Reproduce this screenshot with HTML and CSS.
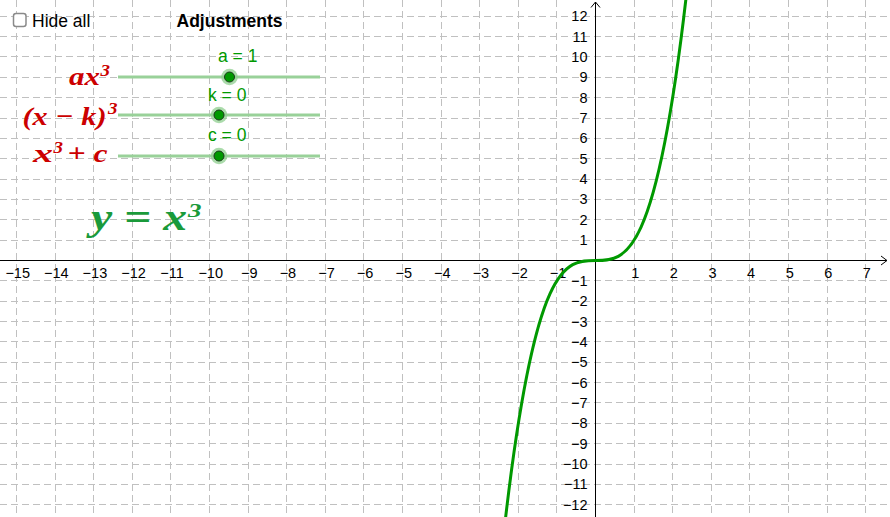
FILE: index.html
```html
<!DOCTYPE html>
<html lang="en">
<head>
<meta charset="utf-8">
<title>Adjustments y = x^3</title>
<link rel="stylesheet" href="styles.css">
</head>
<body>
<div class="stage">
<svg class="plot" width="890" height="517" viewBox="0 0 890 517" xmlns="http://www.w3.org/2000/svg">
  <g class="grid">
    <line x1="16.5" y1="0" x2="16.5" y2="517"/>
    <line x1="55.5" y1="0" x2="55.5" y2="517"/>
    <line x1="93.5" y1="0" x2="93.5" y2="517"/>
    <line x1="132.5" y1="0" x2="132.5" y2="517"/>
    <line x1="170.5" y1="0" x2="170.5" y2="517"/>
    <line x1="209.5" y1="0" x2="209.5" y2="517"/>
    <line x1="248.5" y1="0" x2="248.5" y2="517"/>
    <line x1="286.5" y1="0" x2="286.5" y2="517"/>
    <line x1="325.5" y1="0" x2="325.5" y2="517"/>
    <line x1="363.5" y1="0" x2="363.5" y2="517"/>
    <line x1="402.5" y1="0" x2="402.5" y2="517"/>
    <line x1="441.5" y1="0" x2="441.5" y2="517"/>
    <line x1="479.5" y1="0" x2="479.5" y2="517"/>
    <line x1="518.5" y1="0" x2="518.5" y2="517"/>
    <line x1="556.5" y1="0" x2="556.5" y2="517"/>
    <line x1="634.5" y1="0" x2="634.5" y2="517"/>
    <line x1="672.5" y1="0" x2="672.5" y2="517"/>
    <line x1="711.5" y1="0" x2="711.5" y2="517"/>
    <line x1="749.5" y1="0" x2="749.5" y2="517"/>
    <line x1="788.5" y1="0" x2="788.5" y2="517"/>
    <line x1="827.5" y1="0" x2="827.5" y2="517"/>
    <line x1="865.5" y1="0" x2="865.5" y2="517"/>

    <line x1="0" y1="16.5" x2="890" y2="16.5"/>
    <line x1="0" y1="36.5" x2="890" y2="36.5"/>
    <line x1="0" y1="56.5" x2="890" y2="56.5"/>
    <line x1="0" y1="77.5" x2="890" y2="77.5"/>
    <line x1="0" y1="97.5" x2="890" y2="97.5"/>
    <line x1="0" y1="118.5" x2="890" y2="118.5"/>
    <line x1="0" y1="138.5" x2="890" y2="138.5"/>
    <line x1="0" y1="158.5" x2="890" y2="158.5"/>
    <line x1="0" y1="179.5" x2="890" y2="179.5"/>
    <line x1="0" y1="199.5" x2="890" y2="199.5"/>
    <line x1="0" y1="219.5" x2="890" y2="219.5"/>
    <line x1="0" y1="240.5" x2="890" y2="240.5"/>
    <line x1="0" y1="280.5" x2="890" y2="280.5"/>
    <line x1="0" y1="301.5" x2="890" y2="301.5"/>
    <line x1="0" y1="321.5" x2="890" y2="321.5"/>
    <line x1="0" y1="341.5" x2="890" y2="341.5"/>
    <line x1="0" y1="362.5" x2="890" y2="362.5"/>
    <line x1="0" y1="382.5" x2="890" y2="382.5"/>
    <line x1="0" y1="402.5" x2="890" y2="402.5"/>
    <line x1="0" y1="423.5" x2="890" y2="423.5"/>
    <line x1="0" y1="443.5" x2="890" y2="443.5"/>
    <line x1="0" y1="464.5" x2="890" y2="464.5"/>
    <line x1="0" y1="484.5" x2="890" y2="484.5"/>
    <line x1="0" y1="504.5" x2="890" y2="504.5"/>
  </g>

  <g class="axis">
    <line x1="0" y1="260.5" x2="887" y2="260.5"/>
    <polyline class="arrow" points="881,256 887,260.5 881,265"/>
    <line x1="595.5" y1="517" x2="595.5" y2="2"/>
    <polyline class="arrow" points="591,7.5 595.5,2 600,7.5"/>
  </g>

  <g class="xlabels">
    <text x="17.7" y="278">−15</text>
    <text x="56.3" y="278">−14</text>
    <text x="94.9" y="278">−13</text>
    <text x="133.5" y="278">−12</text>
    <text x="172.1" y="278">−11</text>
    <text x="210.7" y="278">−10</text>
    <text x="249.3" y="278">−9</text>
    <text x="287.9" y="278">−8</text>
    <text x="326.5" y="278">−7</text>
    <text x="365.1" y="278">−6</text>
    <text x="403.7" y="278">−5</text>
    <text x="442.3" y="278">−4</text>
    <text x="480.9" y="278">−3</text>
    <text x="519.5" y="278">−2</text>
    <text x="558.1" y="278">−1</text>
    <text x="635.3" y="278">1</text>
    <text x="673.9" y="278">2</text>
    <text x="712.5" y="278">3</text>
    <text x="751.1" y="278">4</text>
    <text x="789.7" y="278">5</text>
    <text x="828.3" y="278">6</text>
    <text x="866.9" y="278">7</text>
  </g>

  <g class="ylabels">
    <text x="587.5" y="21.3">12</text>
    <text x="587.5" y="41.65">11</text>
    <text x="587.5" y="62">10</text>
    <text x="587.5" y="82.35">9</text>
    <text x="587.5" y="102.7">8</text>
    <text x="587.5" y="123.05">7</text>
    <text x="587.5" y="143.4">6</text>
    <text x="587.5" y="163.75">5</text>
    <text x="587.5" y="184.1">4</text>
    <text x="587.5" y="204.45">3</text>
    <text x="587.5" y="224.8">2</text>
    <text x="587.5" y="245.15">1</text>
    <text x="587.5" y="285.85">−1</text>
    <text x="587.5" y="306.2">−2</text>
    <text x="587.5" y="326.55">−3</text>
    <text x="587.5" y="346.9">−4</text>
    <text x="587.5" y="367.25">−5</text>
    <text x="587.5" y="387.6">−6</text>
    <text x="587.5" y="407.95">−7</text>
    <text x="587.5" y="428.3">−8</text>
    <text x="587.5" y="448.65">−9</text>
    <text x="587.5" y="469">−10</text>
    <text x="587.5" y="489.35">−11</text>
    <text x="587.5" y="509.7">−12</text>
  </g>

  <path class="curve" d="M504.4 528 C565.1 -7 625.9 528 686.6 -7"/>

  <g class="checkbox">
    <rect class="box" x="13.5" y="13.5" width="12.5" height="13" rx="2.5"/>
    <text class="ui" x="32" y="27">Hide all</text>
  </g>
  <text class="ui bold" x="176.5" y="27">Adjustments</text>

  <g class="slider">
    <line class="track" x1="118" y1="77" x2="320" y2="77"/>
    <circle class="halo" cx="229.5" cy="77" r="8.3"/>
    <circle class="knob" cx="229.5" cy="77" r="5"/>
    <text class="value" x="218" y="62">a = 1</text>
  </g>
  <g class="slider">
    <line class="track" x1="118" y1="115" x2="320" y2="115"/>
    <circle class="halo" cx="219" cy="115" r="8.3"/>
    <circle class="knob" cx="219" cy="115" r="5"/>
    <text class="value" x="208" y="100.5">k = 0</text>
  </g>
  <g class="slider">
    <line class="track" x1="118" y1="156" x2="320" y2="156"/>
    <circle class="halo" cx="219" cy="156" r="8.3"/>
    <circle class="knob" cx="219" cy="156" r="5"/>
    <text class="value" x="208" y="140.5">c = 0</text>
  </g>

  <g class="formula red">
    <text class="big" x="69" y="85" textLength="31" lengthAdjust="spacingAndGlyphs">ax</text>
    <text class="sup" x="100.5" y="76" textLength="9.5" lengthAdjust="spacingAndGlyphs">3</text>

    <text class="big" x="22.5" y="125" textLength="84" lengthAdjust="spacingAndGlyphs">(x − k)</text>
    <text class="sup" x="108" y="113.5" textLength="9.5" lengthAdjust="spacingAndGlyphs">3</text>

    <text class="big" x="33" y="162" textLength="20" lengthAdjust="spacingAndGlyphs">x</text>
    <text class="sup" x="53.5" y="152.5" textLength="9.5" lengthAdjust="spacingAndGlyphs">3</text>
    <text class="big" x="67.5" y="162" textLength="40" lengthAdjust="spacingAndGlyphs">+ c</text>
  </g>

  <g class="formula green">
    <text class="huge" x="91" y="230" textLength="96" lengthAdjust="spacingAndGlyphs">y = x</text>
    <text class="hsup" x="188" y="217" textLength="13.5" lengthAdjust="spacingAndGlyphs">3</text>
  </g>
</svg>
</div>
</body>
</html>
```

FILE: styles.css
```css
html, body {
  margin: 0;
  padding: 0;
  background: #ffffff;
}

.stage {
  width: 890px;
  height: 517px;
  overflow: hidden;
  background: #ffffff;
}

.plot {
  display: block;
}

.grid line {
  stroke: #c0c0c0;
  stroke-width: 1;
  stroke-dasharray: 7 4;
  shape-rendering: crispEdges;
}

.axis line {
  stroke: #000000;
  stroke-width: 1;
  shape-rendering: crispEdges;
}

.axis .arrow {
  fill: none;
  stroke: #000000;
  stroke-width: 1;
}

.xlabels text,
.ylabels text {
  font-family: "Liberation Sans", Arial, sans-serif;
  font-size: 14.5px;
  fill: #000000;
}

.xlabels text {
  text-anchor: middle;
}

.ylabels text {
  text-anchor: end;
}

.curve {
  fill: none;
  stroke: #009900;
  stroke-width: 3;
}

.checkbox .box {
  fill: #ffffff;
  stroke: #8a8a8a;
  stroke-width: 1.5;
}

.ui {
  font-family: "Liberation Sans", Arial, sans-serif;
  font-size: 17.5px;
  fill: #000000;
}

.ui.bold {
  font-weight: bold;
}

.slider .track {
  stroke: #99d199;
  stroke-width: 3;
}

.slider .halo {
  fill: #8fcf8f;
  opacity: 0.75;
}

.slider .knob {
  fill: #009900;
  stroke: #1a3a1a;
  stroke-width: 1;
}

.slider .value {
  font-family: "Liberation Sans", Arial, sans-serif;
  font-size: 17.5px;
  fill: #009900;
}

.formula text {
  font-family: "Liberation Serif", "Times New Roman", serif;
  font-style: italic;
  font-weight: bold;
}

.formula.red text {
  fill: #cc0000;
}

.formula.green text {
  fill: #1a9a3a;
}

.formula .big {
  font-size: 26px;
}

.formula .sup {
  font-size: 16px;
}

.formula .huge {
  font-size: 38px;
}

.formula .hsup {
  font-size: 19px;
}
```
